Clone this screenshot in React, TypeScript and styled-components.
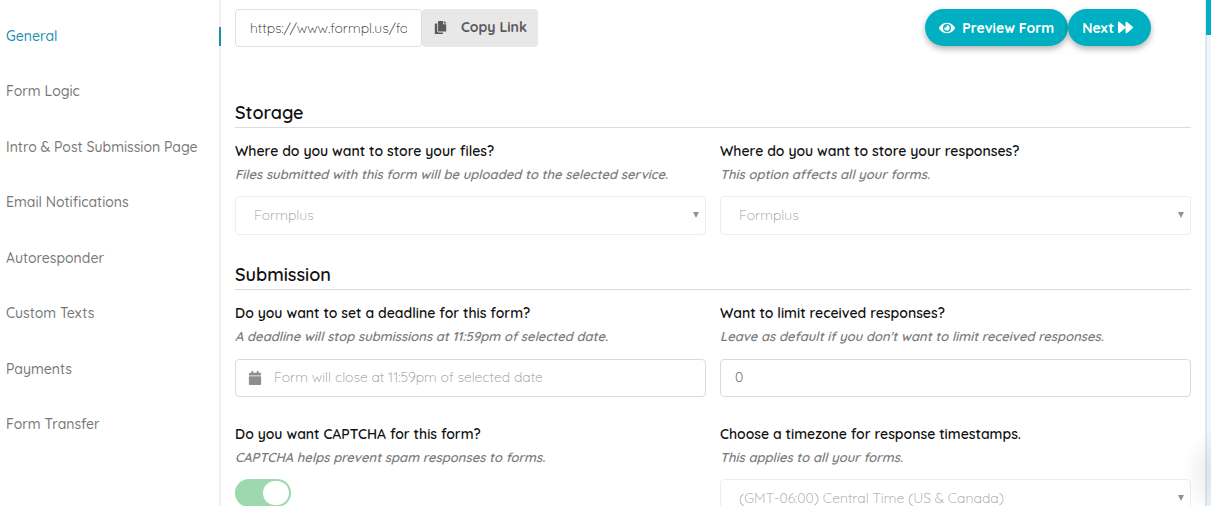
import React from "react";
import styled, { createGlobalStyle } from "styled-components";
import { FaCalendar, FaCopy, FaEye, FaForward } from "react-icons/fa";

const GlobalStyle = createGlobalStyle`
  *, *::before, *::after { box-sizing: border-box; }
  html { overflow: hidden; }
  body {
    margin: 0;
    background: #fff;
    color: #111;
    font-family: Quicksand, Lato, "Liberation Sans", sans-serif;
    font-size: 14px;
  }
  button, input, select { font-family: inherit; }
`;

const Page = styled.div`
  display: flex;
  height: 100vh;
  overflow: hidden;
`;

const Sidebar = styled.nav`
  flex: 0 0 221px;
  border-right: 2px solid #f0f0f0;
`;

const NavList = styled.ul`
  list-style: none;
  margin: 27px 0 0;
  padding: 0;
  height: 407px;
  display: flex;
  flex-direction: column;
  justify-content: space-between;
`;

const NavLink = styled.a<{ $active?: boolean }>`
  display: block;
  margin-right: -2px;
  padding-left: 6px;
  border-right: 2px solid ${(p) => (p.$active ? "#1b8fae" : "transparent")};
  color: ${(p) => (p.$active ? "#1b8fae" : "#777")};
  font-size: 14px;
  font-weight: 500;
  line-height: 19px;
  text-decoration: none;
  white-space: nowrap;
`;

const Main = styled.main`
  flex: 1;
  min-width: 0;
  padding: 9px 14px 0;
`;

const Toolbar = styled.div`
  display: flex;
  justify-content: space-between;
  padding-right: 40px;
  margin-bottom: 53px;
`;

const Group = styled.div`
  display: flex;
`;

const LinkInput = styled.input`
  width: 187px;
  height: 38px;
  padding: 0 14px;
  border: 1px solid #dedede;
  border-radius: 4px;
  background: #fff;
  color: #222;
  font-size: 14px;
  font-weight: 300;
`;

const CopyButton = styled.button`
  display: flex;
  align-items: center;
  gap: 14px;
  height: 38px;
  padding: 0 11px 2px 12px;
  border: 0;
  border-radius: 4px;
  background: #e8e8e8;
  color: #5a5a5a;
  font-size: 14px;
  font-weight: 700;
`;

const PillButton = styled.button<{ $gap: number; $end: number }>`
  display: flex;
  align-items: center;
  gap: ${(p) => p.$gap}px;
  height: 37px;
  padding: 0 ${(p) => p.$end}px 0 14px;
  border: 0;
  border-radius: 19px;
  background: #00afc1;
  color: #fff;
  font-size: 14px;
  font-weight: 700;
  box-shadow: 0 3px 6px rgba(0, 0, 0, 0.3);
`;

const Section = styled.section`
  margin-bottom: 27px;
`;

const Heading = styled.h2`
  margin: 0 0 12px;
  padding-bottom: 1px;
  border-bottom: 1px solid #dcdcdc;
  font-size: 18px;
  font-weight: 600;
  line-height: 26px;
`;

const Fields = styled.div`
  display: grid;
  grid-template-columns: 1fr 1fr;
  gap: 26px 14px;
`;

const Label = styled.label`
  display: block;
  font-size: 14px;
  font-weight: 600;
  line-height: 22px;
`;

const Help = styled.p`
  margin: 0 0 9px;
  color: #7c7c7c;
  font-size: 13px;
  font-style: italic;
  font-weight: 600;
  line-height: 25px;
`;

const Control = styled.div`
  position: relative;
  display: flex;
  align-items: flex-end;
  min-height: 39px;
`;

const SwitchRow = styled.div`
  display: flex;
`;

const TextInput = styled.input<{ $icon?: boolean }>`
  width: 100%;
  height: 38px;
  padding: 0 14px 2px ${(p) => (p.$icon ? 38 : 14)}px;
  border: 1px solid #dadada;
  border-radius: 4px;
  background: #fff;
  color: #222;
  font-size: 14px;
  font-weight: 300;
  &::placeholder { color: #8d9296; opacity: 1; }
`;

const Select = styled.select`
  appearance: none;
  width: 100%;
  height: 39px;
  padding: 0 18px 2px;
  border: 1px solid #eee;
  border-radius: 4px;
  background: #fff;
  color: #999;
  opacity: 1;
  font-size: 14px;
  font-weight: 300;
`;

const Arrow = styled.span`
  position: absolute;
  right: 7px;
  top: 16px;
  border: 3px solid transparent;
  border-top: 6px solid #929292;
  border-bottom: 0;
  pointer-events: none;
`;

const CalendarIcon = styled(FaCalendar)`
  position: absolute;
  left: 13px;
  bottom: 12px;
  color: #8d8f8d;
`;

const Switch = styled.input`
  appearance: none;
  display: flex;
  justify-content: flex-end;
  width: 56px;
  height: 28px;
  margin: 0;
  padding: 2px;
  border-radius: 14px;
  background: #9ed8ae;
  &::before {
    content: "";
    width: 26px;
    height: 24px;
    border-radius: 13px;
    background: #fff;
  }
`;

const Rail = styled.div`
  flex: 0 0 6px;
  border-left: 2px solid #e0e6ef;
  background: #eef5fb;
`;

const RailThumb = styled.div`
  height: 35px;
  margin-left: -1px;
  background: #00afc1;
`;

const CornerShade = styled.div`
  position: fixed;
  right: -36px;
  bottom: -12px;
  width: 64px;
  height: 88px;
  background: radial-gradient(closest-side, rgba(0, 0, 0, 0.08), transparent);
  pointer-events: none;
`;

const navItems = [
  "General",
  "Form Logic",
  "Intro & Post Submission Page",
  "Email Notifications",
  "Autoresponder",
  "Custom Texts",
  "Payments",
  "Form Transfer",
];

interface FieldProps {
  id: string;
  label: string;
  help: string;
  children: React.ReactNode;
}

function Field({ id, label, help, children }: FieldProps) {
  return (
    <div>
      <Label htmlFor={id}>{label}</Label>
      <Help id={`${id}-help`}>{help}</Help>
      {children}
    </div>
  );
}

function SelectField({ option, ...field }: Omit<FieldProps, "children"> & { option: string }) {
  return (
    <Field {...field}>
      <Control>
        <Select id={field.id} aria-describedby={`${field.id}-help`} disabled>
          <option>{option}</option>
        </Select>
        <Arrow />
      </Control>
    </Field>
  );
}

export default function App() {
  return (
    <Page>
      <GlobalStyle />
      <Sidebar aria-label="Form settings">
        <NavList>
          {navItems.map((item, i) => (
            <li key={item}>
              <NavLink href="#" $active={i === 0}>{item}</NavLink>
            </li>
          ))}
        </NavList>
      </Sidebar>
      <Main>
        <Toolbar>
          <Group>
            <LinkInput aria-label="Form link" readOnly value="https://www.formpl.us/form/" />
            <CopyButton type="button"><FaCopy size={13} />Copy Link</CopyButton>
          </Group>
          <Group>
            <PillButton type="button" $gap={7} $end={14}><FaEye size={16} />Preview Form</PillButton>
            <PillButton type="button" $gap={4} $end={18}>Next<FaForward size={15} /></PillButton>
          </Group>
        </Toolbar>
        <Section>
          <Heading>Storage</Heading>
          <Fields>
            <SelectField
              id="files"
              label="Where do you want to store your files?"
              help="Files submitted with this form will be uploaded to the selected service."
              option="Formplus"
            />
            <SelectField
              id="responses"
              label="Where do you want to store your responses?"
              help="This option affects all your forms."
              option="Formplus"
            />
          </Fields>
        </Section>
        <Section>
          <Heading>Submission</Heading>
          <Fields>
            <Field
              id="deadline"
              label="Do you want to set a deadline for this form?"
              help="A deadline will stop submissions at 11:59pm of selected date."
            >
              <Control>
                <TextInput id="deadline" $icon placeholder="Form will close at 11:59pm of selected date" />
                <CalendarIcon size={14} />
              </Control>
            </Field>
            <Field
              id="limit"
              label="Want to limit received responses?"
              help="Leave as default if you don't want to limit received responses."
            >
              <Control>
                <TextInput id="limit" defaultValue="0" />
              </Control>
            </Field>
            <Field
              id="captcha"
              label="Do you want CAPTCHA for this form?"
              help="CAPTCHA helps prevent spam responses to forms."
            >
              <SwitchRow>
                <Switch id="captcha" type="checkbox" role="switch" defaultChecked />
              </SwitchRow>
            </Field>
            <SelectField
              id="timezone"
              label="Choose a timezone for response timestamps."
              help="This applies to all your forms."
              option="(GMT-06:00) Central Time (US & Canada)"
            />
          </Fields>
        </Section>
      </Main>
      <Rail><RailThumb /></Rail>
      <CornerShade />
    </Page>
  );
}
